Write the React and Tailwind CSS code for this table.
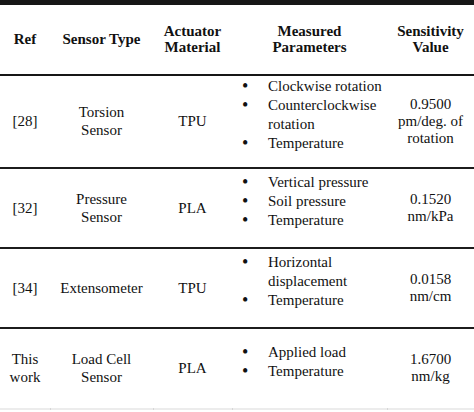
const rows = [
  {
    ref: ["[28]"],
    type: ["Torsion", "Sensor"],
    material: "TPU",
    params: [["Clockwise rotation"], ["Counterclockwise", "rotation"], ["Temperature"]],
    value: ["0.9500", "pm/deg. of", "rotation"],
    h: "h-[93px]",
  },
  {
    ref: ["[32]"],
    type: ["Pressure", "Sensor"],
    material: "PLA",
    params: [["Vertical pressure"], ["Soil pressure"], ["Temperature"]],
    value: ["0.1520", "nm/kPa"],
    h: "h-[80px]",
  },
  {
    ref: ["[34]"],
    type: ["Extensometer"],
    material: "TPU",
    params: [["Horizontal", "displacement"], ["Temperature"]],
    value: ["0.0158", "nm/cm"],
    h: "h-[80px]",
  },
  {
    ref: ["This", "work"],
    type: ["Load Cell", "Sensor"],
    material: "PLA",
    params: [["Applied load"], ["Temperature"]],
    value: ["1.6700", "nm/kg"],
    h: "h-[80px]",
  },
];

function Lines({ items }) {
  return items.map((t, i) => <div key={i}>{t}</div>);
}

export default function App() {
  return (
    <div
      className="w-[474px] h-[412px] overflow-hidden bg-white text-[#111]"
      style={{ fontFamily: '"Liberation Serif", "Times New Roman", serif' }}
    >
      <table className="w-[474px] border-collapse table-fixed text-[15px] leading-[18px]">
        <colgroup>
          <col className="w-[50px]" />
          <col className="w-[103px]" />
          <col className="w-[79px]" />
          <col className="w-[155px]" />
          <col className="w-[87px]" />
        </colgroup>
        <thead>
          <tr className="h-[72px] border-t-[5px] border-b-2 border-[#161616] font-bold leading-[16px] text-center">
            <th className="align-middle">Ref</th>
            <th className="align-middle">Sensor Type</th>
            <th className="align-middle">
              <div>Actuator</div>
              <div>Material</div>
            </th>
            <th className="align-middle">
              <div>Measured</div>
              <div>Parameters</div>
            </th>
            <th className="align-middle">
              <div>Sensitivity</div>
              <div>Value</div>
            </th>
          </tr>
        </thead>
        <tbody>
          {rows.map((r, i) => (
            <tr
              key={i}
              className={`${r.h} ${i < rows.length - 1 ? "border-b-2 border-[#1c1c1c]" : ""} text-center`}
            >
              <td className="align-middle">
                <Lines items={r.ref} />
              </td>
              <td className="align-middle">
                <Lines items={r.type} />
              </td>
              <td className="align-middle">{r.material}</td>
              <td className="align-middle text-left">
                <ul className="pb-3 leading-[19px]">
                  {r.params.map((p, j) => (
                    <li key={j} className="flex">
                      <span className="w-[36px] shrink-0 pl-[10px] text-[18px] leading-[19px]">•</span>
                      <span>
                        <Lines items={p} />
                      </span>
                    </li>
                  ))}
                </ul>
              </td>
              <td className="align-middle leading-[17px]">
                <Lines items={r.value} />
              </td>
            </tr>
          ))}
          <tr className="h-[2px] bg-[#ececec]">
            <td className="p-0" />
            <td className="p-0 border-l border-[#d6d6d6]" />
            <td className="p-0 border-l border-[#d6d6d6]" />
            <td className="p-0 border-l border-[#d6d6d6]" />
            <td className="p-0 border-l border-[#d6d6d6]" />
          </tr>
        </tbody>
      </table>
    </div>
  );
}
